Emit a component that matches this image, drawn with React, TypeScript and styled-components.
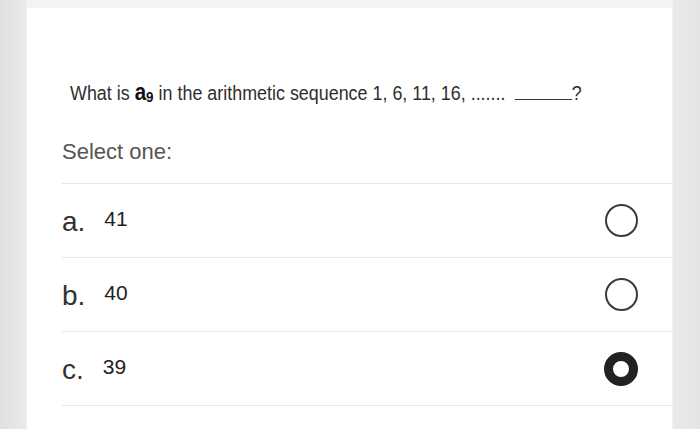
import React, { useState } from 'react';
import styled, { createGlobalStyle } from 'styled-components';

const GlobalStyle = createGlobalStyle`
  html, body {
    margin: 0;
    padding: 0;
    background: #e7e7e7;
  }
  body {
    font-family: "Liberation Sans", Arial, sans-serif;
  }
`;

const Page = styled.main`
  width: 700px;
  height: 429px;
  overflow: hidden;
  background: linear-gradient(90deg, #e0e0e0 0px, #ebebeb 27px, #ebebeb 672px, #e4e4e4 700px);
`;

const Card = styled.section`
  margin: 0 28px 0 27px;
  height: 429px;
  background: #fff;
  box-shadow: 1px 0 0 #f2f2f2, -1px 0 0 #f2f2f2;
`;

const TopBand = styled.div`
  height: 8px;
  background: #f3f3f3;
`;

const Question = styled.p`
  display: inline-block;
  white-space: nowrap;
  margin: 73px 0 0 43px;
  font-size: 20px;
  line-height: 23px;
  color: #2e2e2e;
  transform: scaleX(0.895);
  transform-origin: left center;
`;

const Term = styled.b`
  font-size: 23px;
  color: #111;
`;

const TermIndex = styled.sub`
  font-size: 15px;
  font-weight: bold;
  vertical-align: -2px;
  color: #111;
`;

const Blank = styled.span`
  display: inline-block;
  width: 64px;
  margin-left: 10px;
  border-bottom: 1.5px solid #333;
  vertical-align: 0;
`;

const Prompt = styled.h3`
  margin: 31px 0 0 35px;
  font-weight: normal;
  font-size: 22px;
  line-height: 26px;
  color: #555;
`;

const Options = styled.ul`
  list-style: none;
  margin: 18px 0 0 35px;
  padding: 0;
  border-bottom: 1px solid #e6e6e6;
`;

const Row = styled.li`
  display: flex;
  align-items: center;
  justify-content: space-between;
  height: 73px;
  border-top: 1px solid #e6e6e6;
  padding-right: 34px;
  cursor: pointer;
`;

const Choice = styled.span`
  font-size: 28px;
  line-height: 32px;
`;

const Letter = styled.span`
  color: #333;
`;

const Value = styled.span`
  margin-left: 19px;
  font-size: 21px;
  color: #222;
  vertical-align: 5px;
`;

const Radio = styled.span<{ $checked: boolean }>`
  box-sizing: border-box;
  width: ${p => (p.$checked ? 34 : 33)}px;
  height: ${p => (p.$checked ? 34 : 33)}px;
  border-radius: 50%;
  border: ${p => (p.$checked ? '9px solid #222' : '2px solid #3a3a3a')};
  background: #fff;
`;

const choices = [
  { letter: 'a.', value: '41' },
  { letter: 'b.', value: '40' },
  { letter: 'c.', value: '39' },
];

const App: React.FC = () => {
  const [selected, setSelected] = useState(2);

  return (
    <>
      <GlobalStyle />
      <Page>
        <Card>
          <TopBand />
          <Question>
            What is <Term>a</Term><TermIndex>9</TermIndex> in the arithmetic sequence 1, 6, 11, 16, .......
            <Blank />?
          </Question>
          <Prompt>Select one:</Prompt>
          <Options>
            {choices.map((c, i) => (
              <Row key={c.letter} onClick={() => setSelected(i)}>
                <Choice>
                  <Letter>{c.letter}</Letter>
                  <Value>{c.value}</Value>
                </Choice>
                <Radio $checked={selected === i} />
              </Row>
            ))}
          </Options>
        </Card>
      </Page>
    </>
  );
};

export default App;
